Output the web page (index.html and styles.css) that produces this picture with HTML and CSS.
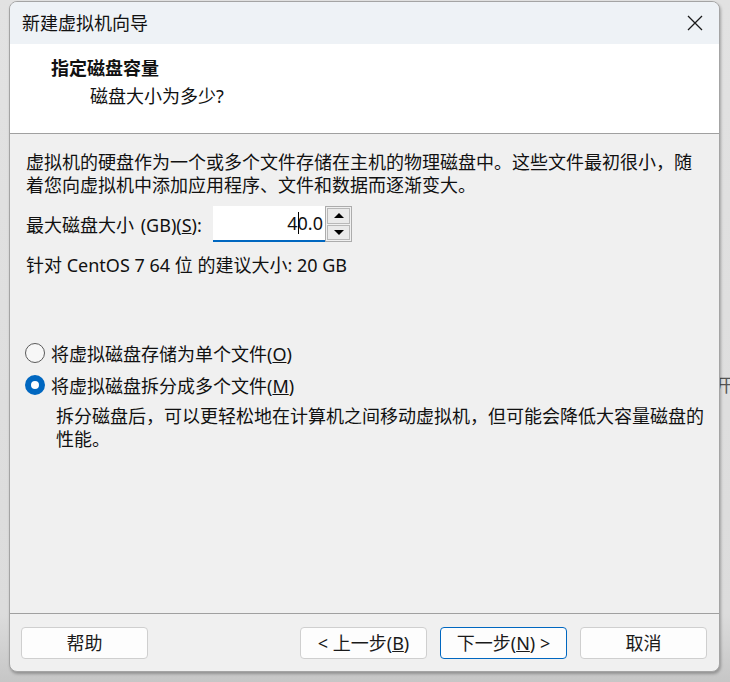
FILE: index.html
```html
<!DOCTYPE html>
<html lang="zh-CN">
<head>
<meta charset="utf-8">
<title>新建虚拟机向导</title>
<link rel="stylesheet" href="styles.css">
</head>
<body>
<div class="desk-glyph">开</div>
<div class="window">
  <div class="titlebar">
    <span class="title">新建虚拟机向导</span>
    <svg class="close" width="16" height="16" viewBox="0 0 16 16"><path d="M1 1 L15 15 M15 1 L1 15" stroke="#1a1a1a" stroke-width="1.3" fill="none"/></svg>
  </div>
  <div class="header">
    <div class="h-title">指定磁盘容量</div>
    <div class="h-sub">磁盘大小为多少?</div>
  </div>
  <div class="content">
    <p class="desc">虚拟机的硬盘作为一个或多个文件存储在主机的物理磁盘中。这些文件最初很小，随着您向虚拟机中添加应用程序、文件和数据而逐渐变大。</p>
    <div class="size-row">
      <span class="size-label">最大磁盘大小 (GB)(<u>S</u>):</span>
      <div class="spin">
        <div class="spin-input"><span>4</span><span class="caret"></span><span>0.0</span></div>
        <div class="spin-btns">
          <div class="spin-btn"><span class="tri-up"></span></div>
          <div class="spin-btn"><span class="tri-down"></span></div>
        </div>
      </div>
    </div>
    <div class="rec">针对 CentOS 7 64 位 的建议大小: 20 GB</div>
    <div class="options">
      <div class="radio-row"><span class="radio"></span><span>将虚拟磁盘存储为单个文件(<u>O</u>)</span></div>
      <div class="radio-row"><span class="radio checked"></span><span>将虚拟磁盘拆分成多个文件(<u>M</u>)</span></div>
      <p class="opt-desc">拆分磁盘后，可以更轻松地在计算机之间移动虚拟机，但可能会降低大容量磁盘的性能。</p>
    </div>
  </div>
  <div class="footer">
    <button class="btn">帮助</button>
    <div class="spacer"></div>
    <button class="btn">&lt; 上一步(<u>B</u>)</button>
    <button class="btn primary">下一步(<u>N</u>) &gt;</button>
    <button class="btn">取消</button>
  </div>
</div>
</body>
</html>
```

FILE: styles.css
```css
html, body {
  margin: 0;
  padding: 0;
}
body {
  width: 730px;
  height: 682px;
  overflow: hidden;
  background: linear-gradient(to bottom, #e2e2e2 0%, #dcdcdc 90%, #c6c6c6 100%);
  font-family: "Noto Sans", "Noto Sans CJK SC", sans-serif;
  color: #111;
  padding-top: 1px;
  box-sizing: border-box;
}
.desk-glyph {
  position: absolute;
  left: 714px;
  top: 371px;
  font-size: 18px;
  color: #555;
}
.window {
  position: relative;
  z-index: 1;
  margin-left: 9px;
  width: 711px;
  height: 671px;
  box-sizing: border-box;
  border: 1px solid #a4a4a4;
  border-radius: 8px;
  overflow: hidden;
  background: #f0f0f0;
  display: flex;
  flex-direction: column;
  box-shadow: 1px 2px 3px rgba(0,0,0,0.28);
}
.titlebar {
  height: 42px;
  flex: none;
  background: #eef2f6;
  display: flex;
  align-items: center;
  padding: 0 16px 0 12px;
  justify-content: space-between;
}
.title {
  font-size: 18px;
  line-height: 24px;
  color: #111;
}
.close {
  display: block;
}
.header {
  height: 89px;
  flex: none;
  background: #fff;
  border-bottom: 1px solid #a0a0a0;
  box-sizing: content-box;
}
.h-title {
  font-size: 18px;
  font-weight: bold;
  line-height: 24px;
  padding-left: 41px;
  margin-top: 12px;
}
.h-sub {
  font-size: 18px;
  line-height: 24px;
  padding-left: 80px;
  margin-top: 4px;
}
.content {
  flex: 1;
  padding: 17px 16px 0 16px;
  font-size: 18px;
  border-bottom: 1px solid #a0a0a0;
}
.desc {
  margin: 0;
  line-height: 23px;
}
.size-row {
  display: flex;
  align-items: center;
  margin-top: 9px;
  height: 36px;
}
.size-label {
  width: 187px;
  flex: none;
  word-spacing: 2px;
}
.spin {
  display: flex;
  height: 36px;
}
.spin-input {
  width: 112px;
  box-sizing: border-box;
  background: #fff;
  border-bottom: 2px solid #0067c0;
  display: flex;
  align-items: center;
  justify-content: flex-end;
  padding-right: 2px;
  font-size: 18px;
}
.caret {
  display: inline-block;
  width: 1px;
  height: 22px;
  background: #000;
  margin: 0 -1px 0 0;
}
.spin-btns {
  width: 27px;
  box-sizing: border-box;
  border: 1px solid #acacac;
  display: flex;
  flex-direction: column;
  background: #f0f0f0;
  padding: 1px;
  gap: 1px;
}
.spin-btn {
  flex: 1;
  border: 1px solid #b8b8b8;
  background: #eaeaea;
  display: flex;
  align-items: center;
  justify-content: center;
}
.tri-up {
  width: 0;
  height: 0;
  border-left: 5px solid transparent;
  border-right: 5px solid transparent;
  border-bottom: 5px solid #000;
}
.tri-down {
  width: 0;
  height: 0;
  border-left: 5px solid transparent;
  border-right: 5px solid transparent;
  border-top: 5px solid #000;
}
.rec {
  margin-top: 12px;
  line-height: 23px;
}
.options {
  margin-top: 64px;
}
.radio-row {
  display: flex;
  align-items: center;
  gap: 6px;
  height: 24px;
  margin-left: -1px;
  margin-bottom: 8px;
}
.radio {
  width: 20px;
  height: 20px;
  box-sizing: border-box;
  border-radius: 50%;
  border: 1px solid #5a5a5a;
  background: #f7f7f7;
  flex: none;
}
.radio.checked {
  border: 6px solid #0067c0;
  background: #fff;
}
.opt-desc {
  margin: 8px -8px 0 30px;
  line-height: 23px;
}
.footer {
  height: 57px;
  flex: none;
  display: flex;
  align-items: center;
  padding: 0 12px 0 11px;
  gap: 13px;
}
.spacer {
  flex: 1;
}
.btn {
  width: 127px;
  height: 32px;
  box-sizing: border-box;
  background: #fdfdfd;
  border: 1px solid #cfcfcf;
  border-radius: 4px;
  font-family: "Noto Sans", "Noto Sans CJK SC", sans-serif;
  font-size: 18px;
  color: #1a1a1a;
  padding: 0;
  line-height: 28px;
}
.btn.primary {
  border-color: #0067c0;
}
```
